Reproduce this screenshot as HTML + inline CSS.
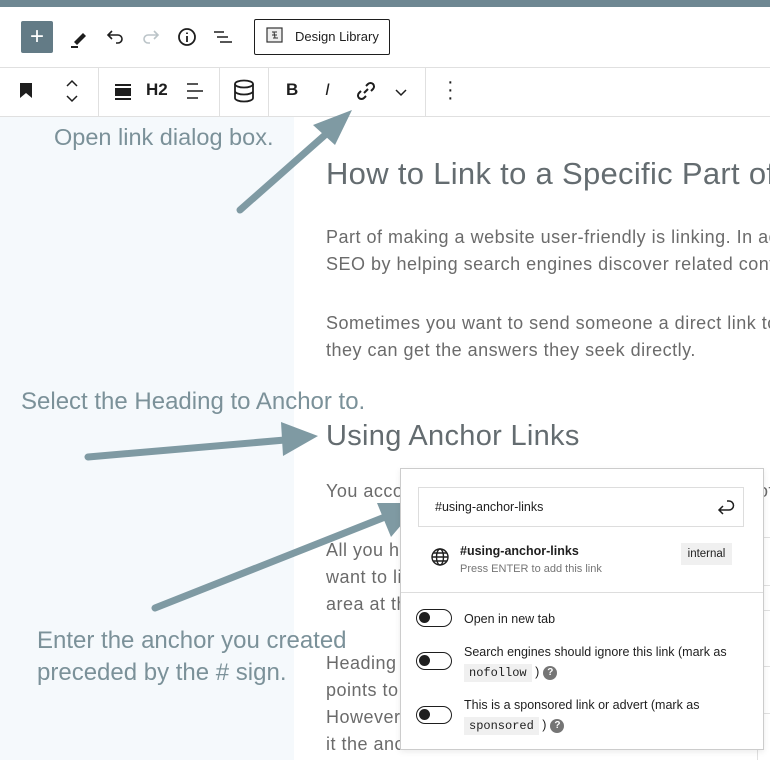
<!DOCTYPE html>
<html><head><meta charset="utf-8"><style>
*{margin:0;padding:0;box-sizing:border-box}
body{width:770px;height:760px;overflow:hidden;background:#fff;font-family:"Liberation Sans",sans-serif;position:relative}
.a{position:absolute}
.sep{position:absolute;top:67px;height:50px;width:1px;background:#e0e0e0}
.body{position:absolute;left:326px;font-size:18px;color:#6b6b6b;line-height:27px;white-space:nowrap;letter-spacing:.5px}
.h{position:absolute;left:326px;font-weight:300;color:#646c70;white-space:nowrap;font-size:31px;letter-spacing:.3px}
.ann{position:absolute;color:#7b9199;font-size:24px;white-space:nowrap}
.tg{position:absolute;left:416px;width:36px;height:18px;border:1.5px solid #1e1e1e;border-radius:9px}
.tg:after{content:"";position:absolute;left:2px;top:2px;width:11px;height:11px;border-radius:50%;background:#1e1e1e}
.lbl{position:absolute;left:464px;font-size:12.5px;color:#1e1e1e;line-height:20px}
code{font-family:"Liberation Mono",monospace;background:#f0f0f0;padding:2px 5px;font-size:12px}
.q{display:inline-block;width:14px;height:14px;border-radius:50%;background:#757575;color:#fff;font-size:10px;font-weight:bold;text-align:center;line-height:14px;vertical-align:middle;margin-left:4px}
</style></head><body>
<div class="a" style="left:0;top:0;width:770px;height:7px;background:#6e8792"></div>
<div class="a" style="left:0;top:67px;width:770px;height:1px;background:#e0e0e0"></div>
<div class="a" style="left:0;top:116px;width:770px;height:1px;background:#e0e0e0"></div>
<div class="a" style="left:0;top:117px;width:294px;height:643px;background:#f5f9fc"></div>
<!-- toolbar 1 -->
<div class="a" style="left:21px;top:21px;width:32px;height:32px;background:#637b86;border-radius:2px;color:#fff;font-size:24px;text-align:center;line-height:31px">+</div>
<svg class="a" style="left:66px;top:25px" width="26" height="26" viewBox="0 0 26 26"><path d="M8 17 L17 8 L20 11 L11 20 Z" fill="#1e1e1e"/><path d="M5 22 H12" stroke="#1e1e1e" stroke-width="2"/></svg>
<svg class="a" style="left:102px;top:25px" width="26" height="26" viewBox="0 0 26 26" fill="none" stroke="#1e1e1e" stroke-width="1.6"><path d="M7 10 H16 A4 4 0 0 1 16 18 H14 M10 6 L6 10 L10 14"/></svg>
<svg class="a" style="left:138px;top:25px" width="26" height="26" viewBox="0 0 26 26" fill="none" stroke="#bbc4c8" stroke-width="1.6"><path d="M19 10 H10 A4 4 0 0 0 10 18 H12 M16 6 L20 10 L16 14"/></svg>
<svg class="a" style="left:174px;top:25px" width="26" height="26" viewBox="0 0 26 26" fill="none" stroke="#1e1e1e" stroke-width="1.8"><circle cx="13" cy="12" r="8"/><path d="M13 11 V17 M13 7.5 V9"/></svg>
<svg class="a" style="left:210px;top:25px" width="26" height="26" viewBox="0 0 26 26" stroke="#1e1e1e" stroke-width="1.6"><path d="M4 7 H14 M7 12 H18 M10 17 H22"/></svg>
<div class="a" style="left:254px;top:19px;width:136px;height:36px;border:1px solid #1e1e1e;border-radius:2px;font-size:13px;color:#1e1e1e;line-height:34px;padding-left:40px">Design Library</div>
<svg class="a" style="left:266px;top:27px" width="18" height="18" viewBox="0 0 18 18"><rect x="1" y="1" width="15" height="14" fill="#eee" stroke="#333" stroke-width="1.2"/><path d="M6 5 L11 5 M6 8 L11 8 M7 11 H12 M8 5 L9 11" stroke="#333" stroke-width="1"/></svg>
<!-- toolbar 2 -->
<div class="sep" style="left:98px"></div><div class="sep" style="left:219px"></div><div class="sep" style="left:268px"></div><div class="sep" style="left:425px"></div>
<svg class="a" style="left:18px;top:82px" width="18" height="18"><path d="M2 1 H14 V16 L8 11 L2 16 Z" fill="#1e1e1e"/></svg>
<svg class="a" style="left:62px;top:78px" width="20" height="26" fill="none" stroke="#1e1e1e" stroke-width="1.5"><path d="M5 8 L10 3 L15 8 M5 18 L10 23 L15 18"/></svg>
<svg class="a" style="left:113px;top:82px" width="20" height="20"><rect x="2" y="2" width="16" height="2" fill="#1e1e1e"/><rect x="2" y="6" width="16" height="8" fill="#1e1e1e"/><rect x="2" y="16" width="16" height="2" fill="#1e1e1e"/></svg>
<div class="a" style="left:146px;top:80px;font-weight:bold;font-size:17px;color:#1e1e1e">H2</div>
<svg class="a" style="left:186px;top:80px" width="20" height="22" stroke="#1e1e1e" stroke-width="1.5"><path d="M1 4 H12 M1 11 H17 M1 18 H12"/></svg>
<svg class="a" style="left:232px;top:78px" width="24" height="26" fill="none" stroke="#1e1e1e" stroke-width="1.8"><ellipse cx="12" cy="6" rx="9" ry="3.5"/><path d="M3 6 V20 A9 3.5 0 0 0 21 20 V6 M3 13 A9 3.5 0 0 0 21 13"/></svg>
<div class="a" style="left:286px;top:80px;font-weight:bold;font-size:17px;color:#1e1e1e">B</div>
<div class="a" style="left:325px;top:80px;font-style:italic;font-size:17px;color:#1e1e1e">I</div>
<svg class="a" style="left:355px;top:80px" width="22" height="22" fill="none" stroke="#1e1e1e" stroke-width="2"><path d="M9 13 L13 9"/><path d="M11 6 L13 4 A3 3 0 0 1 18 9 L16 11"/><path d="M6 11 L4 13 A3 3 0 0 0 9 18 L11 16"/></svg>
<svg class="a" style="left:393px;top:84px" width="16" height="16" fill="none" stroke="#1e1e1e" stroke-width="1.5"><path d="M3 6 L8 11 L13 6"/></svg>
<div class="a" style="left:447px;top:78px;font-size:20px;color:#1e1e1e;line-height:8px;width:6px;text-align:center">·<br>·<br>·</div>
<!-- content -->
<div class="h" style="top:156px">How to Link to a Specific Part of a Page</div>
<div class="body" style="top:224px">Part of making a website user-friendly is linking. In addition, internal linking</div>
<div class="body" style="top:251px">SEO by helping search engines discover related content.</div>
<div class="body" style="top:310px">Sometimes you want to send someone a direct link to a specific part of a page</div>
<div class="body" style="top:337px">they can get the answers they seek directly.</div>
<div class="h" style="top:420px;font-size:29px">Using Anchor Links</div>
<div class="body" style="top:478px">You accomplish this by linking to a specific section of a page</div>
<div class="body" style="top:537px">All you have to do is add an anchor</div>
<div class="body" style="top:564px">want to link to the block settings</div>
<div class="body" style="top:591px">area at the end of the page.</div>
<div class="body" style="top:650px">Heading blocks</div>
<div class="body" style="top:677px">points to anchor</div>
<div class="body" style="top:704px">However you</div>
<div class="body" style="top:731px">it the anchor</div>
<div class="a" style="left:757px;top:537px;width:1px;height:223px;background:#e0e0e0"></div>
<div class="a" style="left:740px;top:537px;width:30px;height:1px;background:#e0e0e0"></div>
<div class="a" style="left:740px;top:585px;width:30px;height:1px;background:#e0e0e0"></div>
<div class="a" style="left:740px;top:610px;width:30px;height:1px;background:#e0e0e0"></div>
<div class="a" style="left:740px;top:666px;width:30px;height:1px;background:#e0e0e0"></div>
<div class="a" style="left:740px;top:713px;width:30px;height:1px;background:#e0e0e0"></div>
<!-- annotations -->
<div class="ann" style="left:54px;top:124px;font-size:23.5px">Open link dialog box.</div>
<div class="ann" style="left:21px;top:388px">Select the Heading to Anchor to.</div>
<div class="ann" style="left:37px;top:625px;line-height:32px">Enter the anchor you created<br>preceded by the # sign.</div>
<svg class="a" style="left:0;top:0" width="770" height="760">
<g stroke="#7f9aa3" stroke-width="7" stroke-linecap="round" fill="#7f9aa3">
<path d="M240 210 L325 135"/><path d="M88 457 L285 440"/><path d="M155 608 L385 517"/>
</g>
<g fill="#7f9aa3">
<polygon points="352,110 313,125 335,145"/>
<polygon points="318,436 281,422 283,456"/>
<polygon points="420,503 377,503 391,537"/>
</g>
</svg>
<!-- popup -->
<div class="a" style="left:400px;top:468px;width:364px;height:282px;background:#fff;border:1px solid #ccc;box-shadow:0 2px 6px rgba(0,0,0,.08)"></div>
<div class="a" style="left:418px;top:487px;width:326px;height:40px;border:1px solid #ddd;font-size:12.5px;color:#1e1e1e;line-height:38px;padding-left:16px">#using-anchor-links</div>
<svg class="a" style="left:714px;top:497px" width="22" height="20" fill="none" stroke="#1e1e1e" stroke-width="1.5"><path d="M13 4 H15 A4 4 0 0 1 15 13 H5 M9 9 L5 13 L9 17"/></svg>
<svg class="a" style="left:430px;top:547px" width="20" height="20" fill="none" stroke="#1e1e1e" stroke-width="1.4"><circle cx="10" cy="10" r="8"/><ellipse cx="10" cy="10" rx="3.5" ry="8"/><path d="M2 10 H18 M3.5 6 H16.5 M3.5 14 H16.5"/></svg>
<div class="a" style="left:460px;top:544px;font-size:12.5px;font-weight:bold;color:#1e1e1e">#using-anchor-links</div>
<div class="a" style="left:460px;top:563px;font-size:11px;color:#757575">Press ENTER to add this link</div>
<div class="a" style="left:681px;top:543px;width:51px;height:22px;background:#f0f0f0;font-size:11.5px;color:#1e1e1e;text-align:center;line-height:22px">internal</div>
<div class="a" style="left:401px;top:592px;width:362px;height:1px;background:#ddd"></div>
<div class="tg" style="top:609px"></div><div class="lbl" style="top:609px">Open in new tab</div>
<div class="tg" style="top:652px"></div><div class="lbl" style="top:642px">Search engines should ignore this link (mark as<br><code>nofollow</code> )<span class="q">?</span></div>
<div class="tg" style="top:706px"></div><div class="lbl" style="top:695px">This is a sponsored link or advert (mark as<br><code>sponsored</code> )<span class="q">?</span></div>
</body></html>
